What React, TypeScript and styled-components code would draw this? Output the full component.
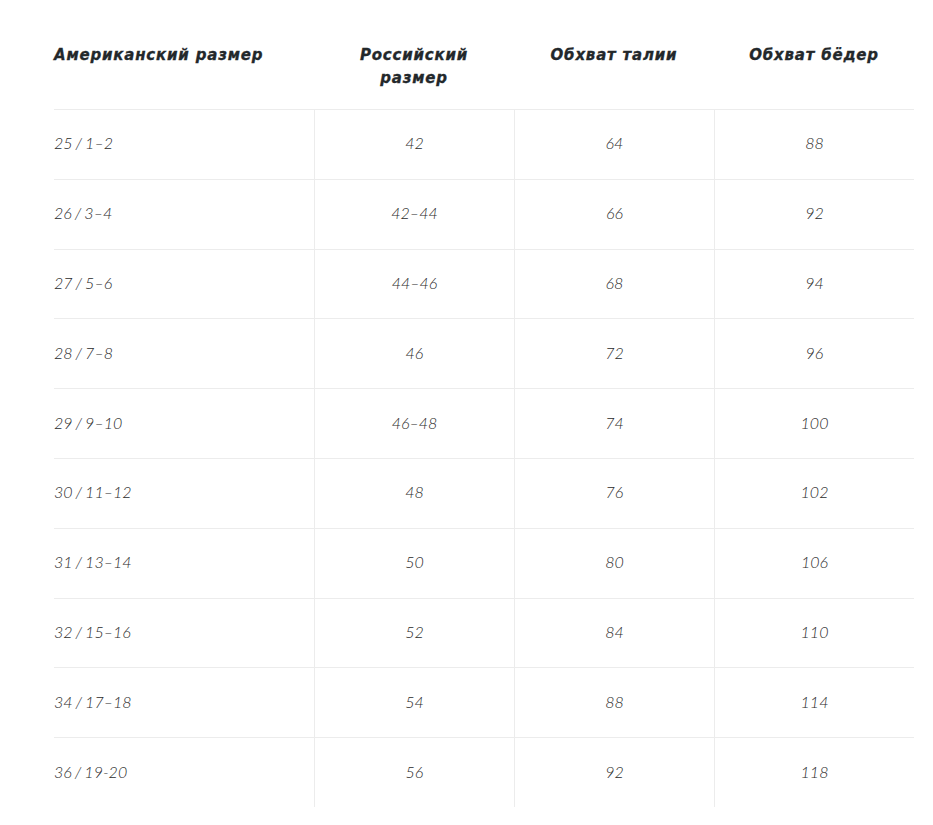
import React from "react";
import styled, { createGlobalStyle } from "styled-components";

const Global = createGlobalStyle`
  html, body { margin: 0; padding: 0; background: #ffffff; }
  body { font-family: "Lato", "DejaVu Sans", sans-serif; }
`;

const Page = styled.div`
  padding: 44px 0 0 54px;
  width: 860px;
`;

const Table = styled.div`
  display: flex;
  flex-direction: column;
  width: 860px;
`;

const HeadRow = styled.div`
  display: grid;
  grid-template-columns: 260px 200px 200px 200px;
  height: 65px;
`;

const HeadCell = styled.div<{ $left?: boolean }>`
  font-family: "DejaVu Sans", sans-serif;
  font-style: italic;
  font-weight: 700;
  font-size: 15px;
  line-height: 23px;
  letter-spacing: 0.8px;
  -webkit-text-stroke: 0.3px #23282b;
  color: #23282b;
  text-align: ${(p) => (p.$left ? "left" : "center")};
  padding: 0 ${(p) => (p.$left ? "0" : "30px")};
`;

const Row = styled.div`
  display: grid;
  grid-template-columns: 260px 200px 200px 200px;
  height: 69.8px;
  border-top: 1px solid #ececec;
  box-sizing: border-box;
`;

const Cell = styled.div<{ $left?: boolean }>`
  display: flex;
  align-items: center;
  justify-content: ${(p) => (p.$left ? "flex-start" : "center")};
  border-left: ${(p) => (p.$left ? "none" : "1px solid #ececec")};
  padding-bottom: 3px;
  font-family: "Lato", sans-serif;
  font-style: italic;
  font-weight: 300;
  font-size: 16px;
  word-spacing: -1px;
  color: #2b2b2b;
`;

const headers = ["Американский размер", "Российский размер", "Обхват талии", "Обхват бёдер"];

const rows: string[][] = [
  ["25 / 1–2", "42", "64", "88"],
  ["26 / 3–4", "42–44", "66", "92"],
  ["27 / 5–6", "44–46", "68", "94"],
  ["28 / 7–8", "46", "72", "96"],
  ["29 / 9–10", "46–48", "74", "100"],
  ["30 / 11–12", "48", "76", "102"],
  ["31 / 13–14", "50", "80", "106"],
  ["32 / 15–16", "52", "84", "110"],
  ["34 / 17–18", "54", "88", "114"],
  ["36 / 19-20", "56", "92", "118"],
];

export default function App() {
  return (
    <Page>
      <Global />
      <Table>
        <HeadRow>
          {headers.map((h, i) => (
            <HeadCell key={h} $left={i === 0}>
              {h}
            </HeadCell>
          ))}
        </HeadRow>
        {rows.map((r, ri) => (
          <Row key={ri}>
            {r.map((c, ci) => (
              <Cell key={ci} $left={ci === 0}>
                {c}
              </Cell>
            ))}
          </Row>
        ))}
      </Table>
    </Page>
  );
}
